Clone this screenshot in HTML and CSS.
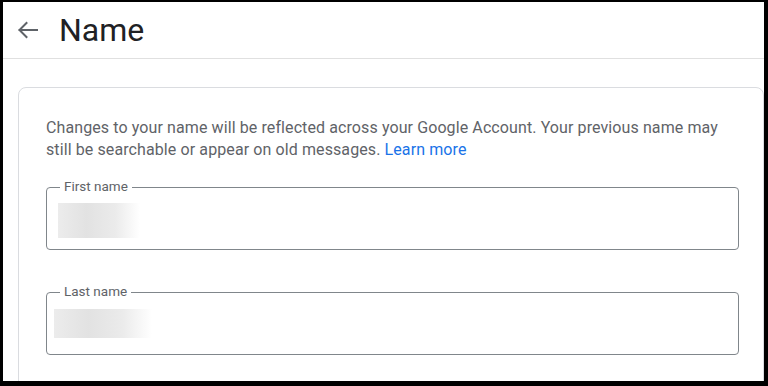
FILE: index.html
```html
<!DOCTYPE html>
<html>
<head>
<meta charset="utf-8">
<link rel="stylesheet" href="styles.css">
</head>
<body>
<div class="frame">
  <header class="header">
    <svg class="back" width="24" height="24" viewBox="0 0 24 24" aria-hidden="true">
      <path d="M21 12H3.5M10.5 5L3.5 12l7 7" fill="none" stroke="#5f6368" stroke-width="2" stroke-linecap="square"/>
    </svg>
    <h1 class="title">Name</h1>
  </header>
  <section class="card">
    <p class="intro">Changes to your name will be reflected across your Google Account. Your previous name may still be searchable or appear on old messages. <a class="link" href="#">Learn more</a></p>
    <div class="field field-first">
      <span class="label">First name</span>
      <div class="blur blur-first"></div>
    </div>
    <div class="field field-last">
      <span class="label">Last name</span>
      <div class="blur blur-last"></div>
    </div>
  </section>
</div>
</body>
</html>
```
FILE: styles.css
```css
html, body {
  margin: 0;
  padding: 0;
  background: #000;
  height: 386px;
  overflow: hidden;
}
.frame {
  margin: 2px 4px 0 3px;
  height: 379px;
  background: #fff;
  overflow: hidden;
  font-family: Roboto, "Noto Sans", Arial, sans-serif;
}
.header {
  display: flex;
  align-items: center;
  height: 56px;
  padding-left: 13px;
  border-bottom: 1px solid #e0e0e0;
}
.back {
  display: block;
  flex: none;
}
.title {
  margin: 0 0 0 19px;
  font-size: 32px;
  font-weight: 400;
  color: #202124;
  line-height: 40px;
}
.card {
  margin: 28px 0 0 15px;
  border: 1px solid #dadce0;
  border-radius: 8px;
  padding: 29px 24px 40px 27px;
  height: 400px;
}
.intro {
  margin: 0;
  font-size: 16px;
  letter-spacing: 0.1px;
  line-height: 22px;
  color: #5f6368;
}
.link {
  color: #1a73e8;
  text-decoration: none;
}
.field {
  position: relative;
  border: 1px solid #80868b;
  border-radius: 4px;
  height: 61px;
}
.field-first {
  margin-top: 26px;
}
.field-last {
  margin-top: 42px;
}
.label {
  position: absolute;
  top: -10px;
  left: 13px;
  padding: 0 4px;
  background: #fff;
  font-size: 13.5px;
  line-height: 16px;
  color: #5f6368;
}
.blur {
  background: linear-gradient(to right, #ececec 0%, #e2e2e2 35%, #ebebeb 70%, #ffffff 100%);
}
.blur-first {
  margin: 15px 0 0 11px;
  width: 82px;
  height: 35px;
}
.blur-last {
  margin: 16px 0 0 7px;
  width: 98px;
  height: 29px;
}
```
